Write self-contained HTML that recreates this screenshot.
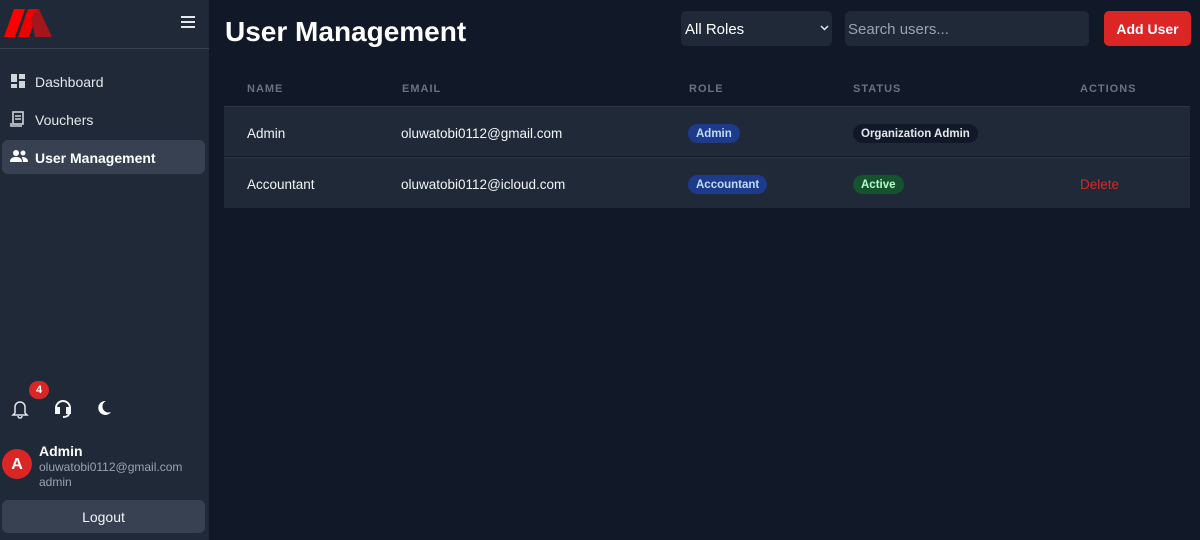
<!DOCTYPE html>
<html><head><style>
*{box-sizing:border-box;margin:0;padding:0}
body{width:1200px;height:540px;background:#111827;font-family:"Liberation Sans",sans-serif;color:#fff;position:relative;overflow:hidden}
.sb{position:absolute;left:0;top:0;width:209px;height:540px;background:#1f2937}
.logo{position:absolute;left:4px;top:8px}
.ham{position:absolute;left:181px;top:16px;width:14px}
.ham i{display:block;height:2px;background:#e5e7eb;margin-bottom:3px}
.sep{position:absolute;left:0;top:48px;width:209px;height:1px;background:#374151}
.nav{position:absolute;left:2px;width:203px;height:34px;border-radius:6px;font-size:14px;color:#e5e7eb;padding-left:33px;line-height:36px}
.nav.act{background:#374151;font-weight:bold;color:#fff}
.nav svg{position:absolute;left:8px;top:9px}
.badge{position:absolute;left:29px;top:381px;width:20px;height:18px;border-radius:9px;background:#dc2626;font-size:11px;font-weight:bold;text-align:center;line-height:18px}
.av{position:absolute;left:2px;top:449px;width:30px;height:30px;border-radius:50%;background:#dc2626;font-weight:bold;font-size:16px;text-align:center;line-height:32px}
.logout{position:absolute;left:2px;top:500px;width:203px;height:33px;border-radius:6px;background:#374151;font-size:14px;text-align:center;line-height:35px;color:#f3f4f6}
h1{position:absolute;left:225px;top:16px;font-size:28px;font-weight:bold}
.sel{position:absolute;left:681px;top:11px;width:151px;height:35px;border-radius:5px;background:#1f2937;font-size:15px;line-height:38px;padding-left:4px}
.srch{position:absolute;left:845px;top:11px;width:244px;height:35px;border-radius:5px;background:#1f2937;font-size:15px;line-height:38px;padding-left:3px;color:#9ca3af}
.add{position:absolute;left:1104px;top:11px;width:87px;height:35px;border-radius:5px;background:#dc2626;font-size:14px;font-weight:bold;line-height:37px;text-align:center}
.th{position:absolute;top:83px;font-size:11px;letter-spacing:1px;color:#6b7280;font-weight:bold}
.row{position:absolute;left:224px;width:966px;height:50px;background:#1f2937;border-top:1px solid #2d3748}
.c{position:absolute;top:0;line-height:53px;font-size:13.5px;color:#f3f4f6}
.pill{position:absolute;top:17px;height:19px;border-radius:10px;font-size:11.5px;font-weight:bold;line-height:20px;padding:0 8px}
</style></head><body>
<div class="sb">
<svg class="logo" width="50" height="30" viewBox="0 0 50 30"><polygon points="0,29 10,1 21,1 11,29" fill="#ff0000"/><polygon points="14,29 24,1 35,1 25,29" fill="#ee0000"/><polygon points="27,8 35,1 48,29 31,29" fill="#a3161c"/></svg>
<div class="ham"><i></i><i></i><i></i></div>
<div class="sep"></div>
<div class="nav" style="top:64px"><svg width="16" height="16" viewBox="0 0 16 16" fill="#d1d5db"><rect x="1" y="1" width="6" height="8"/><rect x="9" y="1" width="6" height="5"/><rect x="1" y="11" width="6" height="4"/><rect x="9" y="8" width="6" height="7"/></svg>Dashboard</div>
<div class="nav" style="top:102px"><svg width="16" height="16" viewBox="0 0 16 16" fill="none" stroke="#d1d5db" stroke-width="1.6"><rect x="3" y="1" width="10" height="12"/><path d="M5 5h6M5 8h6M1 12v3h11"/></svg>Vouchers</div>
<div class="nav act" style="top:140px"><svg width="18" height="14" viewBox="0 0 18 14" fill="#fff"><circle cx="6" cy="4" r="3"/><circle cx="13" cy="4" r="2.5"/><path d="M0 13c0-4 3-5 6-5s6 1 6 5z M12 8c3 0 6 1 6 5h-5c0-2-1-4-1-5z"/></svg>User Management</div>
<svg style="position:absolute;left:11px;top:399px" width="18" height="20" viewBox="0 0 18 20" fill="none" stroke="#e5e7eb" stroke-width="1.5"><path d="M4 14V8a5 5 0 0 1 10 0v6l2 2H2z M7 17a2 2 0 0 0 4 0"/></svg>
<div class="badge">4</div>
<svg style="position:absolute;left:53px;top:399px" width="20" height="20" viewBox="0 0 20 20" fill="none" stroke="#f3f4f6" stroke-width="2"><path d="M3 12V9a7 7 0 0 1 14 0v3"/><rect x="3" y="9" width="3" height="5" fill="#f3f4f6"/><rect x="14" y="9" width="3" height="5" fill="#f3f4f6"/><path d="M16 14c0 3-3 4-6 4"/></svg>
<svg style="position:absolute;left:96px;top:400px" width="16" height="16" viewBox="0 0 16 16"><path d="M10 1a7 7 0 1 0 5 11A6 6 0 0 1 10 1z" fill="#fff"/></svg>
<div class="av">A</div>
<div style="position:absolute;left:39px;top:443px;font-size:14px;font-weight:bold">Admin</div>
<div style="position:absolute;left:39px;top:460px;font-size:12px;color:#9ca3af;line-height:15px">oluwatobi0112@gmail.com<br>admin</div>
<div class="logout">Logout</div>
</div>
<h1>User Management</h1>
<div class="sel">All Roles<svg style="position:absolute;right:3px;top:14px" width="9" height="6" viewBox="0 0 9 6" fill="none" stroke="#e5e7eb" stroke-width="1.5"><path d="M1 1l3.5 3.5L8 1"/></svg></div>
<div class="srch">Search users...</div>
<div class="add">Add User</div>
<div class="th" style="left:247px">NAME</div><div class="th" style="left:402px">EMAIL</div><div class="th" style="left:689px">ROLE</div><div class="th" style="left:853px">STATUS</div><div class="th" style="left:1080px">ACTIONS</div>
<div class="row" style="top:106px">
<div class="c" style="left:23px">Admin</div><div class="c" style="left:177px">oluwatobi0112@gmail.com</div>
<div class="pill" style="left:464px;background:#1e3a8a;color:#bfdbfe">Admin</div>
<div class="pill" style="left:629px;background:#111827;color:#e5e7eb">Organization Admin</div>
</div>
<div class="row" style="top:157px;height:51px">
<div class="c" style="left:23px">Accountant</div><div class="c" style="left:177px">oluwatobi0112@icloud.com</div>
<div class="pill" style="left:464px;background:#1e3a8a;color:#bfdbfe">Accountant</div>
<div class="pill" style="left:629px;background:#14532d;color:#bbf7d0">Active</div>
<div class="c" style="left:856px;color:#dc2626">Delete</div>
</div>
</body></html>
